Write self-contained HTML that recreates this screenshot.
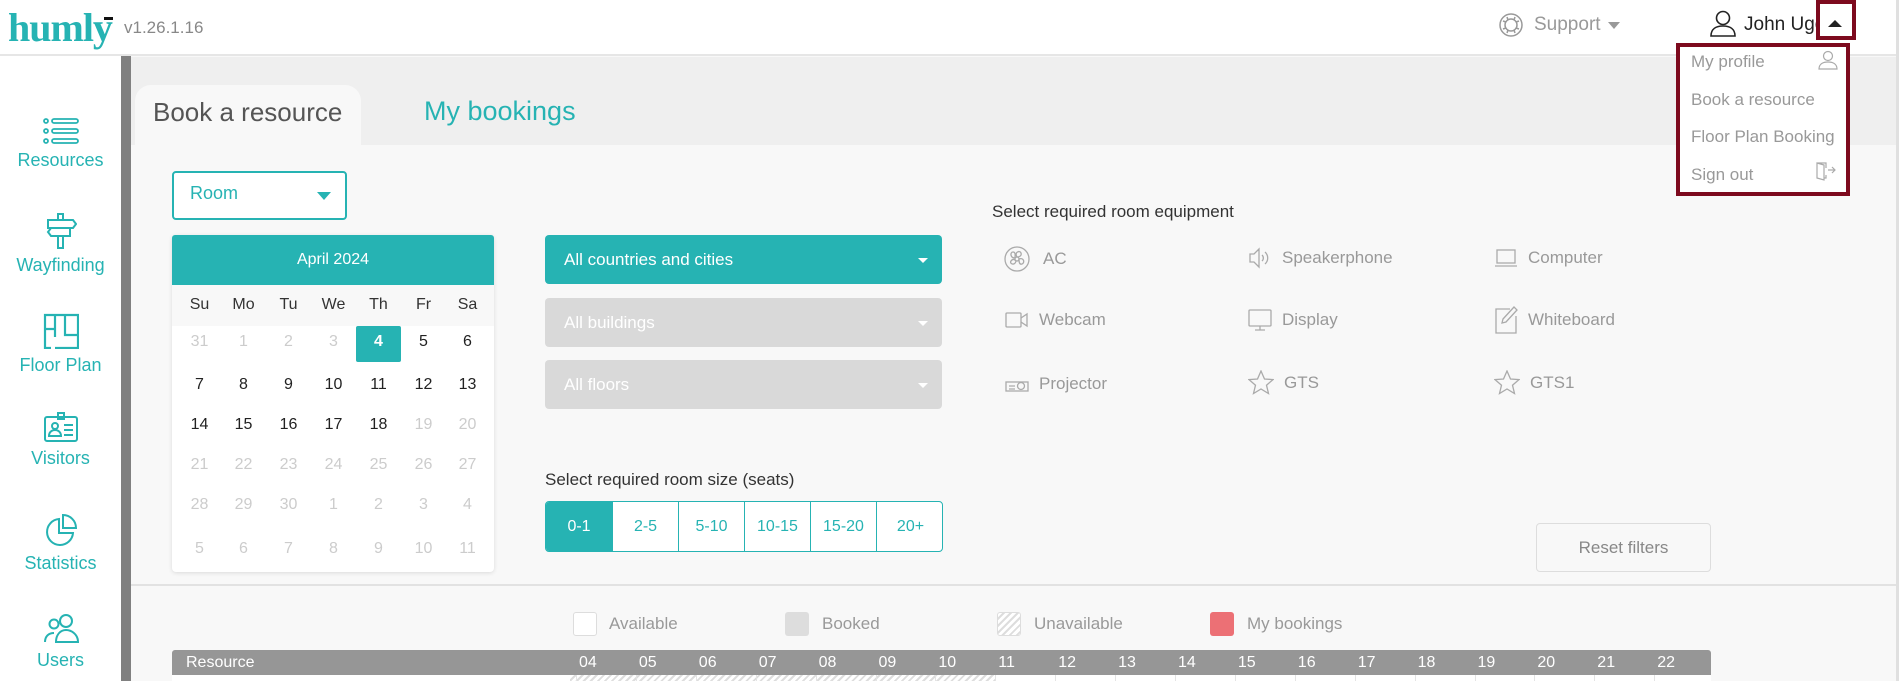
<!DOCTYPE html>
<html><head><meta charset="utf-8"><style>
*{box-sizing:border-box;margin:0;padding:0}
body{width:1899px;height:681px;overflow:hidden;background:#f8f8f8;font-family:"Liberation Sans",sans-serif;position:relative}
.a{position:absolute}
.t{color:#26b3b3}
.side{left:0;top:56px;width:121px;height:625px;background:#fff}
.si{position:absolute;left:0;width:121px;text-align:center;font-size:18px;color:#26b3b3}
.si svg{display:block;margin:0 auto 6px}
.dn{position:absolute;width:45px;text-align:center;font-size:16px}
.eq{position:absolute;font-size:17px;color:#999;display:flex;align-items:center}
.eq svg{margin-right:10px}
.sz{position:absolute;top:0;height:50px;width:66px;line-height:50px;text-align:center;font-size:16px;color:#26b3b3;border-left:1px solid #26b3b3}
.hr{position:absolute;top:650px;font-size:16px;color:#fff;line-height:25px}
.mi{position:absolute;left:1691px;font-size:17px;color:#999}
</style></head><body>
<!-- header -->
<div class="a" style="left:0;top:0;width:1899px;height:56px;background:#fff;border-bottom:2px solid #e6e6e6"></div>
<div class="a" style="left:8px;top:4px;font-family:'Liberation Serif',serif;font-weight:bold;font-size:40px;color:#26b3b3;letter-spacing:-1px">humly</div>
<div class="a" style="left:104px;top:17px;width:9px;height:3px;background:#111"></div>
<div class="a" style="left:124px;top:18px;font-size:17px;color:#888">v1.26.1.16</div>
<svg class="a" style="left:1498px;top:12px" width="26" height="26" viewBox="0 0 26 26" fill="none" stroke="#999" stroke-width="1.5"><circle cx="13" cy="13" r="11"/><circle cx="13" cy="13" r="6"/><path d="M9 5l1 3M17 5l-1 3M9 21l1-3M17 21l-1-3M5 9l3 1M21 9l-3 1M5 17l3-1M21 17l-3-1"/></svg>
<div class="a" style="left:1534px;top:14px;font-size:19px;color:#999">Support</div>
<div class="a" style="left:1608px;top:22px;border-left:6px solid transparent;border-right:6px solid transparent;border-top:7px solid #999"></div>
<svg class="a" style="left:1709px;top:9px" width="28" height="28" viewBox="0 0 28 28" fill="none" stroke="#222" stroke-width="1.6"><circle cx="14" cy="9" r="6.5"/><path d="M2 27c0-7 5-10 12-10s12 3 12 10z"/></svg>
<div class="a" style="left:1744px;top:14px;font-size:19px;color:#222;width:72px;overflow:hidden;white-space:nowrap">John Ugo</div>
<div class="a" style="left:1816px;top:0;width:40px;height:40px;border:4px solid #7d0a1e;background:#fff"></div>
<div class="a" style="left:1828px;top:20px;border-left:7px solid transparent;border-right:7px solid transparent;border-bottom:7px solid #222"></div>
<div class="a" style="right:0;top:0;width:3px;height:681px;background:#e0e0e0"></div>
<!-- sidebar -->
<div class="a side"></div>
<div class="a" style="left:121px;top:56px;width:10px;height:625px;background:#808080"></div>
<div class="si" style="top:118px"><svg width="36" height="26" viewBox="0 0 36 26" fill="none" stroke="#26b3b3" stroke-width="1.8"><circle cx="3" cy="3" r="2"/><circle cx="3" cy="13" r="2"/><circle cx="3" cy="23" r="2"/><rect x="9" y="1" width="26" height="4" rx="2"/><rect x="9" y="11" width="26" height="4" rx="2"/><rect x="9" y="21" width="26" height="4" rx="2"/></svg>Resources</div>
<div class="si" style="top:213px"><svg width="32" height="36" viewBox="0 0 32 36" fill="none" stroke="#26b3b3" stroke-width="2"><path d="M13 1h5v6h-5zM3 7h25l3 4-3 4H3zM6 15h19v8H6l-3-4zM13 23h5v12h-5z"/></svg>Wayfinding</div>
<div class="si" style="top:313px"><svg width="36" height="36" viewBox="0 0 36 36" fill="none" stroke="#26b3b3" stroke-width="2.2"><path d="M8 35H2V2h33v33H12M2 16h10M12 2v22M22 2v20h13"/></svg>Floor Plan</div>
<div class="si" style="top:412px"><svg width="34" height="30" viewBox="0 0 34 30" fill="none" stroke="#26b3b3" stroke-width="2"><rect x="1" y="5" width="32" height="24" rx="2"/><path d="M14 1h6v6h-6z"/><circle cx="11" cy="14" r="3"/><path d="M5 24c0-4 3-6 6-6s6 2 6 6zM20 13h9M20 18h9M20 23h9"/></svg>Visitors</div>
<div class="si" style="top:513px"><svg width="34" height="34" viewBox="0 0 34 34" fill="none" stroke="#26b3b3" stroke-width="2"><path d="M15 6a13 13 0 1 0 14 14H15z"/><path d="M19 2a13 13 0 0 1 13 13H19z"/></svg>Statistics</div>
<div class="si" style="top:614px"><svg width="36" height="30" viewBox="0 0 36 30" fill="none" stroke="#26b3b3" stroke-width="2"><circle cx="11" cy="10" r="4.5"/><circle cx="23" cy="7" r="6"/><path d="M2 28c0-6 4-9 9-9M13 28c0-8 5-12 10-12s12 4 12 12z"/></svg>Users</div>
<!-- tabs -->
<div class="a" style="left:131px;top:57px;width:1765px;height:88px;background:#efefef"></div>
<div class="a" style="left:135px;top:85px;width:226px;height:62px;background:#f8f8f8;border-radius:16px 16px 0 0"></div>
<div class="a" style="left:153px;top:97px;font-size:26px;color:#555">Book a resource</div>
<div class="a t" style="left:424px;top:96px;font-size:27px">My bookings</div>
<!-- room select -->
<div class="a" style="left:172px;top:171px;width:175px;height:49px;border:2px solid #26b3b3;border-radius:4px;background:#fff"></div>
<div class="a t" style="left:190px;top:183px;font-size:18px">Room</div>
<div class="a" style="left:317px;top:192px;border-left:7px solid transparent;border-right:7px solid transparent;border-top:8px solid #26b3b3"></div>
<!-- calendar -->
<div class="a" style="left:172px;top:235px;width:322px;height:337px;background:#fff;border-radius:4px;box-shadow:0 1px 4px rgba(0,0,0,.12)"></div>
<div class="a" style="left:172px;top:235px;width:322px;height:50px;background:#26b3b3;border-radius:3px 3px 0 0;color:#fff;font-size:16px;text-align:center;line-height:50px">April 2024</div>
<div class="a" style="left:172px;top:285px;width:322px;height:41px;background:#f8f8f8"></div>
<div class="a" style="left:356px;top:326px;width:45px;height:36px;background:#26b3b3;border-radius:2px"></div>
<div id="cal"></div>
<!-- dropdowns -->
<div class="a" style="left:545px;top:235px;width:397px;height:49px;background:#26b3b3;border-radius:4px"></div>
<div class="a" style="left:564px;top:250px;font-size:17px;color:#fff">All countries and cities</div>
<div class="a" style="left:918px;top:258px;border-left:5px solid transparent;border-right:5px solid transparent;border-top:5px solid #fff"></div>
<div class="a" style="left:545px;top:298px;width:397px;height:49px;background:#d9d9d9;border-radius:4px"></div>
<div class="a" style="left:564px;top:313px;font-size:17px;color:#fff">All buildings</div>
<div class="a" style="left:918px;top:321px;border-left:5px solid transparent;border-right:5px solid transparent;border-top:5px solid #fff"></div>
<div class="a" style="left:545px;top:360px;width:397px;height:49px;background:#d9d9d9;border-radius:4px"></div>
<div class="a" style="left:564px;top:375px;font-size:17px;color:#fff">All floors</div>
<div class="a" style="left:918px;top:383px;border-left:5px solid transparent;border-right:5px solid transparent;border-top:5px solid #fff"></div>
<!-- size -->
<div class="a" style="left:545px;top:470px;font-size:17px;color:#333">Select required room size (seats)</div>
<div class="a" style="left:545px;top:501px;width:398px;height:51px;border:1px solid #26b3b3;border-radius:4px;background:#fff;overflow:hidden">
<div class="sz" style="left:0;border:0;background:#26b3b3;color:#fff">0-1</div>
<div class="sz" style="left:66px">2-5</div><div class="sz" style="left:132px">5-10</div><div class="sz" style="left:198px">10-15</div><div class="sz" style="left:264px">15-20</div><div class="sz" style="left:330px;width:68px">20+</div></div>
<!-- equipment -->
<div class="a" style="left:992px;top:202px;font-size:17px;color:#333">Select required room equipment</div>
<div class="eq" style="left:1004px;top:246px"><svg width="26" height="26" viewBox="0 0 26 26" fill="none" stroke="#aaa" stroke-width="1.3"><circle cx="13" cy="13" r="12"/><circle cx="13" cy="13" r="2"/><path d="M13 11c-3-5 3-7 4-4s-2 4-4 4M15 13c5-2 6 4 3 5s-3-3-3-5M12 15c-1 5-7 3-5 0s4-1 5 0M11 12c-5 0-5-6-2-6s2 4 2 6"/></svg><span style="margin-left:3px">AC</span></div>
<div class="eq" style="left:1248px;top:246px"><svg width="24" height="24" viewBox="0 0 24 24" fill="none" stroke="#aaa" stroke-width="1.3"><path d="M2 8h4l5-5v18l-5-5H2zM14 9a4 4 0 0 1 0 6M17 6a8 8 0 0 1 0 12"/></svg><span>Speakerphone</span></div>
<div class="eq" style="left:1494px;top:246px"><svg width="24" height="24" viewBox="0 0 24 24" fill="none" stroke="#aaa" stroke-width="1.3"><rect x="3" y="4" width="18" height="13"/><path d="M1 20h22"/></svg><span>Computer</span></div>
<div class="eq" style="left:1005px;top:308px"><svg width="24" height="24" viewBox="0 0 24 24" fill="none" stroke="#aaa" stroke-width="1.3"><rect x="1" y="5" width="15" height="14" rx="1"/><path d="M16 10l6-4v12l-6-4"/></svg><span>Webcam</span></div>
<div class="eq" style="left:1248px;top:308px"><svg width="24" height="24" viewBox="0 0 24 24" fill="none" stroke="#aaa" stroke-width="1.3"><rect x="1" y="2" width="22" height="16" rx="1"/><path d="M12 18v4M7 22h10"/></svg><span>Display</span></div>
<div class="eq" style="left:1494px;top:306px"><svg width="24" height="28" viewBox="0 0 24 28" fill="none" stroke="#aaa" stroke-width="1.3"><path d="M16 3H2v24h20V10"/><path d="M20 1l3 3-11 12-4 1 1-4z"/></svg><span>Whiteboard</span></div>
<div class="eq" style="left:1005px;top:372px"><svg width="24" height="24" viewBox="0 0 24 24" fill="none" stroke="#aaa" stroke-width="1.3"><rect x="1" y="10" width="22" height="9"/><circle cx="16" cy="14" r="3.5"/><path d="M4 14h6M4 17h6"/></svg><span>Projector</span></div>
<div class="eq" style="left:1248px;top:370px"><svg width="26" height="26" viewBox="0 0 26 26" fill="none" stroke="#aaa" stroke-width="1.3"><path d="M13 1l3.5 8 8.5.6-6.5 5.6 2 8.3L13 19l-7.5 4.5 2-8.3L1 9.6 9.5 9z"/></svg><span>GTS</span></div>
<div class="eq" style="left:1494px;top:370px"><svg width="26" height="26" viewBox="0 0 26 26" fill="none" stroke="#aaa" stroke-width="1.3"><path d="M13 1l3.5 8 8.5.6-6.5 5.6 2 8.3L13 19l-7.5 4.5 2-8.3L1 9.6 9.5 9z"/></svg><span>GTS1</span></div>
<div class="a" style="left:1536px;top:523px;width:175px;height:49px;border:1px solid #ddd;border-radius:4px;background:#f8f8f8;text-align:center;line-height:47px;font-size:17px;color:#888">Reset filters</div>
<!-- divider + legend -->
<div class="a" style="left:131px;top:584px;width:1765px;height:2px;background:#e2e2e2"></div>
<div class="a" style="left:573px;top:612px;width:24px;height:24px;border:1px solid #ddd;border-radius:3px;background:#fff"></div>
<div class="a" style="left:609px;top:614px;font-size:17px;color:#999">Available</div>
<div class="a" style="left:785px;top:612px;width:24px;height:24px;border-radius:3px;background:#ddd"></div>
<div class="a" style="left:822px;top:614px;font-size:17px;color:#999">Booked</div>
<div class="a" style="left:997px;top:612px;width:24px;height:24px;border:1px solid #ddd;border-radius:3px;background:repeating-linear-gradient(135deg,#fff 0 3px,#ddd 3px 5px)"></div>
<div class="a" style="left:1034px;top:614px;font-size:17px;color:#999">Unavailable</div>
<div class="a" style="left:1210px;top:612px;width:24px;height:24px;border-radius:3px;background:#ec7075"></div>
<div class="a" style="left:1247px;top:614px;font-size:17px;color:#999">My bookings</div>
<!-- table -->
<div class="a" style="left:172px;top:650px;width:1539px;height:25px;background:#969696;border-radius:3px 3px 0 0"></div>
<div class="hr" style="left:186px">Resource</div>
<div class="a" style="left:172px;top:675px;width:1539px;height:6px;background:#fff"></div>
<div class="a" style="left:570px;top:675px;width:426px;height:6px;background:repeating-linear-gradient(135deg,#fff 0 3px,#ddd 3px 5px)"></div>
<div id="hrs"></div>
<!-- dropdown menu -->
<div class="a" style="left:1676px;top:43px;width:174px;height:153px;border:4px solid #7d0a1e;background:#fff"></div>
<div class="mi" style="top:52px">My profile</div>
<svg class="a" style="left:1818px;top:50px" width="20" height="20" viewBox="0 0 20 20" fill="none" stroke="#aaa" stroke-width="1.2"><circle cx="10" cy="6" r="4.5"/><path d="M1 19c0-5 4-7 9-7s9 2 9 7z"/></svg>
<div class="mi" style="top:90px">Book a resource</div>
<div class="mi" style="top:127px">Floor Plan Booking</div>
<div class="mi" style="top:165px">Sign out</div>
<svg class="a" style="left:1816px;top:161px" width="20" height="20" viewBox="0 0 20 20" fill="none" stroke="#aaa" stroke-width="1.2"><path d="M1 2l7 2v15l-7-2zM1 2h9v5M10 14v3H8M12 9h7M16 6l3 3-3 3"/></svg>
<script>
var c=document.getElementById('cal'),h='';
var xs=[199,243,288,333,378,423,467],ys=[305,342,385,425,465,505,549];
var names=['Su','Mo','Tu','We','Th','Fr','Sa'];
for(var i=0;i<7;i++)h+='<div class="dn" style="left:'+(xs[i]-22)+'px;top:'+(ys[0]-9)+'px;color:#333">'+names[i]+'</div>';
for(var i=0;i<42;i++){var v,act=false;if(i==0)v=31;else if(i<31){v=i;act=(i>=4&&i<=18);}else v=i-30;
var r=Math.floor(i/7)+1,col=i%7;var color=act?'#222':'#ccc';var st='';if(i==4){color='#fff';st='font-weight:bold;';}
h+='<div class="dn" style="left:'+(xs[col]-22)+'px;top:'+(ys[r]-9)+'px;color:'+color+';'+st+'">'+v+'</div>';}
c.innerHTML=h;
var hh='';for(var k=0;k<19;k++){var n=4+k;hh+='<div class="hr" style="left:'+(579+k*59.9)+'px">'+(n<10?'0'+n:n)+'</div>';
hh+='<div class="a" style="left:'+(576+k*59.9)+'px;top:675px;width:1px;height:6px;background:#e4e4e4"></div>';}
document.getElementById('hrs').innerHTML=hh;
</script>
</body></html>
